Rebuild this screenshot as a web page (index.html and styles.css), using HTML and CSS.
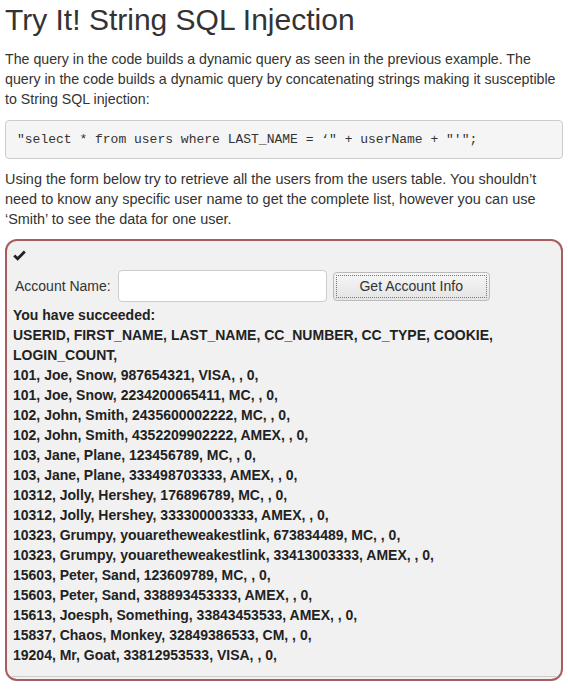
FILE: index.html
```html
<!DOCTYPE html>
<html lang="en">
<head>
<meta charset="UTF-8">
<title>String SQL Injection</title>
<link rel="stylesheet" href="styles.css">
</head>
<body>

<div class="lesson">
    <h1>Try It! String SQL Injection</h1>
    <p>The query in the code builds a dynamic query as seen in the previous example. The query in the code builds a dynamic query by concatenating strings making it susceptible to String SQL injection:</p>
    <pre>"select * from users where LAST_NAME = ‘" + userName + "'";</pre>
    <p class="hint">Using the form below try to retrieve all the users from the users table. You shouldn’t need to know any specific user name to get the complete list, however you can use ‘Smith’ to see the data for one user.</p>

    <div class="attack-container">
        <div class="assignment-success">
            <svg width="13" height="11" viewBox="0 0 13 11"><path d="M1.2 5.6 L4.6 8.8 L11.8 1.6" fill="none" stroke="#222" stroke-width="2.8"/></svg>
        </div>
        <form class="attack-form">
            <label for="account">Account Name:</label>
            <input type="text" id="account" name="account">
            <button type="button" class="btn-submit">Get Account Info</button>
        </form>
        <div class="attack-feedback">
            You have succeeded:<br>
            USERID, FIRST_NAME, LAST_NAME, CC_NUMBER, CC_TYPE, COOKIE, LOGIN_COUNT,<br>
            101, Joe, Snow, 987654321, VISA, , 0,<br>
            101, Joe, Snow, 2234200065411, MC, , 0,<br>
            102, John, Smith, 2435600002222, MC, , 0,<br>
            102, John, Smith, 4352209902222, AMEX, , 0,<br>
            103, Jane, Plane, 123456789, MC, , 0,<br>
            103, Jane, Plane, 333498703333, AMEX, , 0,<br>
            10312, Jolly, Hershey, 176896789, MC, , 0,<br>
            10312, Jolly, Hershey, 333300003333, AMEX, , 0,<br>
            10323, Grumpy, youaretheweakestlink, 673834489, MC, , 0,<br>
            10323, Grumpy, youaretheweakestlink, 33413003333, AMEX, , 0,<br>
            15603, Peter, Sand, 123609789, MC, , 0,<br>
            15603, Peter, Sand, 338893453333, AMEX, , 0,<br>
            15613, Joesph, Something, 33843453533, AMEX, , 0,<br>
            15837, Chaos, Monkey, 32849386533, CM, , 0,<br>
            19204, Mr, Goat, 33812953533, VISA, , 0,
        </div>
        <hr>
    </div>
</div>

</body>
</html>
```

FILE: styles.css
```css
body {
    margin: 0;
    font-family: "Liberation Sans", Arial, sans-serif;
    font-size: 14px;
    line-height: 20px;
    color: #333;
    background: #fff;
}
.lesson {
    padding: 0 5px;
}
h1 {
    font-size: 30px;
    font-weight: normal;
    line-height: 36px;
    margin: 2px 0 11px;
    color: #333;
}
p {
    font-size: 14.2px;
    margin: 0 0 10px;
}
p.hint {
    font-size: 14.45px;
}
pre {
    font-family: "Liberation Mono", "Courier New", monospace;
    font-size: 13px;
    line-height: 18px;
    padding: 9.5px 11px;
    margin: 11px 0 10px;
    background-color: #f5f5f5;
    border: 1px solid #ccc;
    border-radius: 4px;
    color: #333;
}
.attack-container {
    border: 2px solid #a95c5c;
    border-radius: 12px;
    background-color: #f1f1f1;
    padding: 5px 6px 2px 6px;
    margin-top: 10px;
}
.assignment-success {
    height: 20px;
}
.attack-form {
    display: flex;
    align-items: center;
    margin: 4px 0 3px;
}
.attack-form label {
    margin: 0 7px 0 2px;
    color: #333;
}
.attack-form input {
    width: 209px;
    height: 32px;
    box-sizing: border-box;
    border: 1px solid #ccc;
    border-radius: 4px;
    background: #fff;
    padding: 6px 10px;
    font-size: 14px;
}
.btn-submit {
    margin-left: 6px;
    width: 157px;
    height: 29px;
    font-family: "Liberation Sans", Arial, sans-serif;
    font-size: 14px;
    color: #333;
    background: linear-gradient(#f6f6f6, #e4e4e4);
    border: 1px solid #bbb;
    border-radius: 4px;
    outline: 1px dotted #777;
    outline-offset: -4px;
}
.attack-feedback {
    font-weight: bold;
    color: #222;
}
hr {
    border: 0;
    border-top: 1px solid #ccc;
    margin: 11px -1px 0;
}
```
